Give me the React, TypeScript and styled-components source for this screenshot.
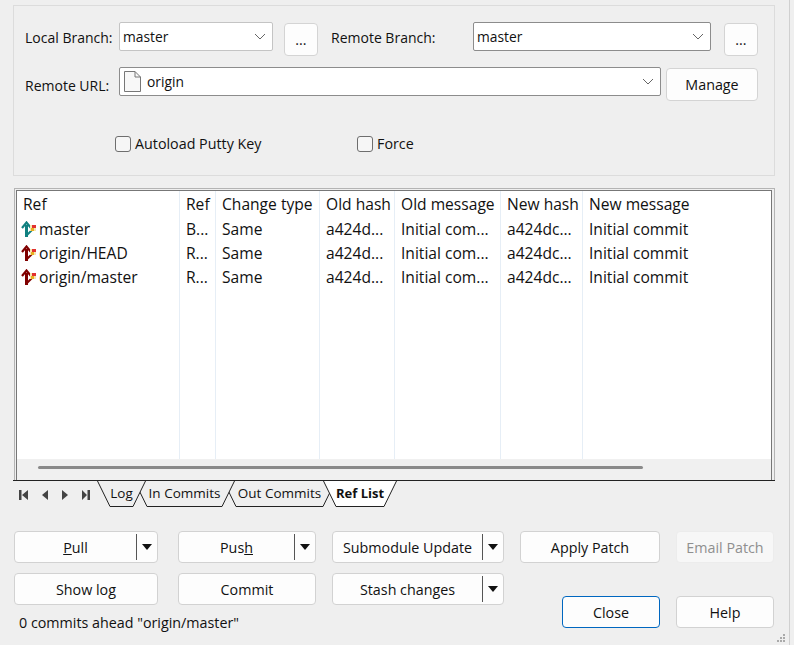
import React from "react";
import styled, { createGlobalStyle } from "styled-components";

const Global = createGlobalStyle`
  html, body { margin: 0; padding: 0; width: 794px; height: 645px; overflow: hidden; background: #efefef; }
  * { box-sizing: border-box; }
  body { font-family: "Open Sans", "Noto Sans", sans-serif; font-size: 14.3px; color: #111; }
`;

const Page = styled.div`
  position: relative;
  width: 794px;
  height: 645px;
  padding: 5px 0 0 13px;
  display: flex;
  flex-direction: column;
`;
const EdgeLine = styled.div`
  position: absolute;
  left: 789px;
  top: 0;
  bottom: 0;
  width: 1px;
  background: #d0d0d0;
`;
const SettingsPanel = styled.div`
  width: 762px;
  height: 171px;
  border: 1px solid #dcdcdc;
  padding: 16px 16px 0 11px;
  display: flex;
  flex-direction: column;
`;
const Row = styled.div<{ $h: number }>`
  display: flex;
  align-items: flex-start;
  height: ${(p) => p.$h}px;
`;
const FieldLabel = styled.label<{ $w: number; $t: number; $ml?: number }>`
  width: ${(p) => p.$w}px;
  margin-left: ${(p) => p.$ml ?? 0}px;
  padding-top: ${(p) => p.$t}px;
  white-space: nowrap;
  font-size: 14px;
  line-height: 20px;
  flex: none;
`;
const Combo = styled.div<{ $w: number; $strong?: boolean }>`
  width: ${(p) => p.$w}px;
  height: 29px;
  background: #fff;
  border: 1px solid ${(p) => (p.$strong ? "#8c8c8c" : "#c4c4c4")};
  border-radius: 2px;
  display: flex;
  align-items: center;
  padding: 0 6px 0 3px;
  flex: none;
`;
const ComboText = styled.span`
  flex: 1;
  font-size: 13.8px;
  line-height: 20px;
`;
const SmallButton = styled.button<{ $w: number; $ml: number }>`
  width: ${(p) => p.$w}px;
  height: 33px;
  margin-left: ${(p) => p.$ml}px;
  margin-top: 1px;
  background: #fdfdfd;
  border: 1px solid #d4d4d4;
  border-radius: 4px;
  font: inherit;
  color: inherit;
  padding: 0;
  flex: none;
`;
const FileIconWrap = styled.span`
  display: flex;
  margin: 0 6px 0 1px;
`;
const Checks = styled.div`
  display: flex;
  align-items: center;
  padding: 23px 0 0 90px;
`;
const CheckItem = styled.label<{ $w?: number }>`
  display: flex;
  align-items: center;
  gap: 4px;
  width: ${(p) => (p.$w ? `${p.$w}px` : "auto")};
  line-height: 20px;
`;
const CheckBox = styled.span`
  width: 16px;
  height: 16px;
  border: 1px solid #6e6e6e;
  border-radius: 3px;
  background: #f6f6f6;
  flex: none;
`;

const ListFrame = styled.div`
  margin-top: 12px;
  width: 761px;
  height: 292px;
  margin-left: 1px;
  border: 1px solid #b4b4b4;
  border-bottom: 0;
  padding: 1px 2px 0 1px;
  background: #efefef;
  display: flex;
  flex-direction: column;
`;
const ListInner = styled.div`
  flex: 1;
  border: 1px solid #777;
  border-bottom: 0;
  display: flex;
  flex-direction: column;
  min-height: 0;
`;
const Columns = styled.div`
  flex: none;
  height: 268px;
  background: #fff;
  display: flex;
  font-size: 15.6px;
`;
const Column = styled.div<{ $w: number; $last?: boolean }>`
  width: ${(p) => p.$w}px;
  flex: ${(p) => (p.$last ? "1" : "none")};
  border-right: ${(p) => (p.$last ? "0" : "1px solid #e6eef6")};
  padding-left: 6px;
  white-space: nowrap;
  overflow: hidden;
`;
const HeadCell = styled.div`
  height: 26px;
  line-height: 27px;
`;
const Cell = styled.div`
  height: 24px;
  line-height: 24px;
  display: flex;
  align-items: center;
`;
const RefGlyph = styled.svg`
  flex: none;
  margin: 0 0 0 -2px;
`;
const ScrollArea = styled.div`
  flex: 1;
  background: #f0f0f0;
  padding: 7px 0 0 21px;
`;
const ScrollThumb = styled.div`
  width: 605px;
  height: 3px;
  border-radius: 2px;
  background: #8a8a8a;
`;

const TabBar = styled.div`
  width: 762px;
  height: 27px;
  border-top: 1px solid #222;
  display: flex;
  align-items: flex-start;
`;
const NavIcons = styled.svg`
  flex: none;
  margin: 9px 0 0 6px;
`;
const Tab = styled.div<{ $w: number; $ml: number; $z: number; $active?: boolean }>`
  position: relative;
  width: ${(p) => p.$w}px;
  height: 26px;
  margin-left: ${(p) => p.$ml}px;
  flex: none;
  text-align: center;
  line-height: 24px;
  font-weight: ${(p) => (p.$active ? 700 : 400)};
  font-size: ${(p) => (p.$active ? 13 : 13.5)}px;
  z-index: ${(p) => p.$z};
`;
const TabShape = styled.svg`
  position: absolute;
  inset: 0;
  z-index: -1;
`;

const Actions = styled.div`
  margin-top: 24px;
  width: 760px;
  margin-left: 1px;
  display: flex;
`;
const LeftActions = styled.div`
  width: 490px;
  flex: none;
`;
const ActionGrid = styled.div`
  display: grid;
  grid-template-columns: 164px 154px 172px;
  row-gap: 10px;
`;
const ActionButton = styled.button<{ $w?: number; $disabled?: boolean; $primary?: boolean }>`
  width: ${(p) => (p.$w ? `${p.$w}px` : "100%")};
  height: 32px;
  background: ${(p) => (p.$disabled ? "#f7f7f7" : "#fdfdfd")};
  border: 1px solid ${(p) => (p.$primary ? "#0067c0" : p.$disabled ? "#ececec" : "#d2d2d2")};
  border-radius: 4px;
  font: inherit;
  color: ${(p) => (p.$disabled ? "#8f8f8f" : "inherit")};
  padding: 0;
  display: flex;
  align-items: center;
  justify-content: center;
`;
const SplitLabel = styled.span`
  flex: 1;
  text-align: center;
`;
const SplitSep = styled.span`
  width: 1px;
  height: 26px;
  background: #555;
  flex: none;
`;
const SplitArrow = styled.span`
  width: 20px;
  flex: none;
  display: flex;
  justify-content: center;
`;
const Triangle = styled.span`
  width: 0;
  height: 0;
  border-left: 5.5px solid transparent;
  border-right: 5.5px solid transparent;
  border-top: 6px solid #111;
`;
const Status = styled.div`
  margin: 8px 0 0 5px;
  line-height: 20px;
`;
const RightActions = styled.div`
  display: flex;
  flex-direction: column;
  padding-left: 16px;
`;
const RightRow = styled.div<{ $mt?: number; $pl?: number }>`
  display: flex;
  gap: 16px;
  margin-top: ${(p) => p.$mt ?? 0}px;
  margin-left: ${(p) => p.$pl ?? 0}px;
`;
const Grip = styled.svg`
  position: absolute;
  right: 7px;
  bottom: 1px;
`;

const Chevron = () => (
  <svg width="12" height="7" viewBox="0 0 12 7" fill="none">
    <path d="M1 1l5 5 5-5" stroke="#666" strokeWidth="1" />
  </svg>
);

const FileIcon = () => (
  <svg width="17" height="21" viewBox="0 0 17 21" fill="none">
    <path d="M.5.5h10.5l5.5 5.5v14.5H.5z" fill="#f8f8f8" stroke="#777" />
    <path d="M11 .5V6h5.5" stroke="#777" fill="none" />
  </svg>
);

const RefIcon = ({ color }: { color: string }) => (
  <RefGlyph width="18" height="17" viewBox="0 0 18 17" fill="none">
    <path d="M5.5 16V4" stroke={color} strokeWidth="3" />
    <path d="M1 7l4.5-5.5L10 7" stroke={color} strokeWidth="2.2" fill="none" />
    <path d="M6 14l5-5" stroke={color} strokeWidth="2" />
    <rect x="9" y="4" width="6" height="6" fill="#f6e6b0" />
    <rect x="11" y="4" width="4" height="3" fill="#e23030" />
    <rect x="10" y="7" width="3" height="3" fill="#e8b020" />
  </RefGlyph>
);

const TabOutline = ({ w, active }: { w: number; active?: boolean }) => (
  <TabShape width={w} height={26} viewBox={`0 0 ${w} 26`} fill="none">
    <path
      d={`M.5 0L13 25.5H${w - 13}L${w - 0.5} 0`}
      fill={active ? "#fff" : "#efefef"}
      stroke="#222"
    />
  </TabShape>
);

const cols: { title: string; w: number; cells: string[]; last?: boolean }[] = [
  { title: "Ref", w: 163, cells: ["master", "origin/HEAD", "origin/master"] },
  { title: "Ref", w: 36, cells: ["B...", "R...", "R..."] },
  { title: "Change type", w: 104, cells: ["Same", "Same", "Same"] },
  { title: "Old hash", w: 75, cells: ["a424d...", "a424d...", "a424d..."] },
  { title: "Old message", w: 106, cells: ["Initial com...", "Initial com...", "Initial com..."] },
  { title: "New hash", w: 82, cells: ["a424dc...", "a424dc...", "a424dc..."] },
  { title: "New message", w: 180, cells: ["Initial commit", "Initial commit", "Initial commit"], last: true },
];

const Split = ({ w, children }: { w: number; children: React.ReactNode }) => (
  <ActionButton $w={w}>
    <SplitLabel>{children}</SplitLabel>
    <SplitSep />
    <SplitArrow>
      <Triangle />
    </SplitArrow>
  </ActionButton>
);

export default function App() {
  return (
    <Page>
      <Global />
      <EdgeLine />
      <SettingsPanel>
        <Row $h={45}>
          <FieldLabel $w={94} $t={6}>Local Branch:</FieldLabel>
          <Combo $w={154}>
            <ComboText>master</ComboText>
            <Chevron />
          </Combo>
          <SmallButton $w={34} $ml={11}>...</SmallButton>
          <FieldLabel $w={142} $t={6} $ml={13}>Remote Branch:</FieldLabel>
          <Combo $w={238} $strong>
            <ComboText>master</ComboText>
            <Chevron />
          </Combo>
          <SmallButton $w={34} $ml={13}>...</SmallButton>
        </Row>
        <Row $h={44}>
          <FieldLabel $w={94} $t={9}>Remote URL:</FieldLabel>
          <Combo $w={542} $strong>
            <FileIconWrap><FileIcon /></FileIconWrap>
            <ComboText>origin</ComboText>
            <Chevron />
          </Combo>
          <SmallButton $w={92} $ml={5}>Manage</SmallButton>
        </Row>
        <Checks>
          <CheckItem $w={242}><CheckBox />Autoload Putty Key</CheckItem>
          <CheckItem><CheckBox />Force</CheckItem>
        </Checks>
      </SettingsPanel>

      <ListFrame>
        <ListInner>
          <Columns>
            {cols.map((c, i) => (
              <Column key={i} $w={c.w} $last={c.last}>
                <HeadCell>{c.title}</HeadCell>
                {c.cells.map((t, j) => (
                  <Cell key={j}>
                    {i === 0 && <RefIcon color={j === 0 ? "#108080" : "#800000"} />}
                    {t}
                  </Cell>
                ))}
              </Column>
            ))}
          </Columns>
          <ScrollArea>
            <ScrollThumb />
          </ScrollArea>
        </ListInner>
      </ListFrame>

      <TabBar>
        <NavIcons width="72" height="10" viewBox="0 0 72 10" fill="#444">
          <path d="M0 0h2.5v10H0zM9 0v10L3 5z" />
          <path d="M29 0v10l-6-5z" />
          <path d="M43 0v10l6-5z" />
          <path d="M63 0l5 5-5 5zM68.5 0H71v10h-2.5z" />
        </NavIcons>
        <Tab $w={49} $ml={6} $z={4}>
          <TabOutline w={49} />Log
        </Tab>
        <Tab $w={101} $ml={-12} $z={3}>
          <TabOutline w={101} />In Commits
        </Tab>
        <Tab $w={113} $ml={-12} $z={2}>
          <TabOutline w={113} />Out Commits
        </Tab>
        <Tab $w={74} $ml={-13} $z={5} $active>
          <TabOutline w={74} active />Ref List
        </Tab>
      </TabBar>

      <Actions>
        <LeftActions>
          <ActionGrid>
            <Split w={144}><u>P</u>ull</Split>
            <Split w={138}>Pus<u>h</u></Split>
            <Split w={172}>Submodule Update</Split>
            <ActionButton $w={144}>Show log</ActionButton>
            <ActionButton $w={138}>Commit</ActionButton>
            <Split w={172}>Stash changes</Split>
          </ActionGrid>
          <Status>0 commits ahead "origin/master"</Status>
        </LeftActions>
        <RightActions>
          <RightRow>
            <ActionButton $w={140}>Apply Patch</ActionButton>
            <ActionButton $w={98} $disabled>Email Patch</ActionButton>
          </RightRow>
          <RightRow $mt={33} $pl={42}>
            <ActionButton $w={98} $primary>Close</ActionButton>
            <ActionButton $w={98}>Help</ActionButton>
          </RightRow>
        </RightActions>
      </Actions>
      <Grip width="10" height="10" viewBox="0 0 10 10" fill="#aaa">
        <rect x="6" y="0" width="2" height="2" />
        <rect x="3" y="3" width="2" height="2" />
        <rect x="6" y="3" width="2" height="2" />
        <rect x="0" y="6" width="2" height="2" />
        <rect x="3" y="6" width="2" height="2" />
        <rect x="6" y="6" width="2" height="2" />
      </Grip>
    </Page>
  );
}
